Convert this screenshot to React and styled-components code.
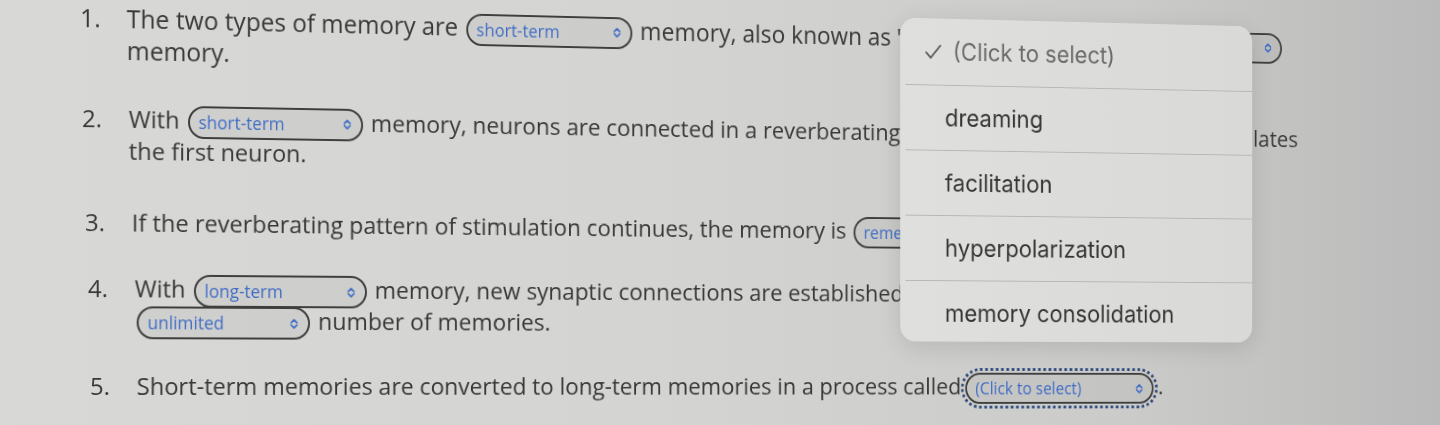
import styled, { createGlobalStyle } from 'styled-components';

const GlobalStyle = createGlobalStyle`
  html, body {
    margin: 0;
    padding: 0;
  }
  body {
    width: 1440px;
    height: 425px;
    overflow: hidden;
    background: linear-gradient(90deg, #d8d8d6 0%, #d4d4d2 45%, #cbcbc9 78%, #bababa 100%);
    font-family: 'Open Sans', 'Liberation Sans', sans-serif;
  }
`;

// the photo was taken at an angle: the right side of the screen is further away
const Page = styled.div`
  position: relative;
  width: 1440px;
  height: 425px;
  box-sizing: border-box;
  padding: 3px 0 0 80px;
  transform-origin: 80px 385px;
  transform: perspective(1000px) rotateY(3.7deg);
`;

const Item = styled.div`
  display: flex;
  margin-top: ${p => p.$top || 0}px;
  padding-left: ${p => p.$indent || 0}px;
  color: #383838;
  font-size: ${p => p.$size || 24}px;
  line-height: ${p => p.$lh || 30}px;
`;

const Num = styled.div`
  width: 47px;
  flex-shrink: 0;
`;

const Text = styled.div`
  white-space: nowrap;
`;

const Pill = styled.span`
  display: inline-flex;
  align-items: center;
  justify-content: space-between;
  box-sizing: border-box;
  width: ${p => p.$w}px;
  height: 33px;
  margin: -2px ${p => (p.$focus ? 5 : 2)}px;
  padding: 0 9px 0 9px;
  vertical-align: middle;
  border: 2px solid #3e3e3e;
  border-radius: 17px;
  background: rgba(0, 0, 0, 0.035);
  color: #3f6cc4;
  font-size: 17.5px;
  line-height: 1;
  outline: ${p => (p.$focus ? '3px dotted #2f4a7c' : 'none')};
  outline-offset: 2px;
`;

const Menu = styled.div`
  position: absolute;
  left: 948px;
  top: -3px;
  width: 403px;
  height: 342px;
  box-sizing: border-box;
  border-radius: 17px;
  background: linear-gradient(90deg, #dfdfdd 0%, #d9d9d7 100%);
  box-shadow: 0 6px 26px rgba(0, 0, 0, 0.12);
  font-family: Inter, 'Noto Sans', sans-serif;
  overflow: hidden;
`;

const Option = styled.div`
  display: flex;
  align-items: center;
  gap: 12px;
  height: ${p => (p.$first ? 70 : 68)}px;
  margin-left: 6px;
  padding-left: ${p => (p.$first ? 21 : 44)}px;
  border-top: ${p => (p.$first ? 'none' : '1px solid #b6b6b4')};
  font-size: 25px;
  color: ${p => (p.$muted ? '#6b6b6b' : '#363636')};
`;

function Chevrons() {
  return (
    <svg width="11" height="14" viewBox="0 0 10 13" fill="none" stroke="#3f6cc4" strokeWidth="1.6" strokeLinecap="round" strokeLinejoin="round">
      <path d="M2.2 5.4 L5 2.6 L7.8 5.4" />
      <path d="M2.2 7.6 L5 10.4 L7.8 7.6" />
    </svg>
  );
}

function Check() {
  return (
    <svg width="20" height="17" viewBox="0 0 17 15" fill="none" stroke="#5e5e5e" strokeWidth="1.7" strokeLinecap="round" strokeLinejoin="round">
      <path d="M1.5 8 L6 13 L15.5 1.5" />
    </svg>
  );
}

function Select({ value, w, focus }) {
  return (
    <Pill $w={w} $focus={focus}>
      <span>{value}</span>
      <Chevrons />
    </Pill>
  );
}

const options = ['dreaming', 'facilitation', 'hyperpolarization', 'memory consolidation'];

export default function App() {
  return (
    <>
      <GlobalStyle />
      <Page>
        <Item $size={25} $lh={28}>
          <Num>1.</Num>
          <Text>
            The two types of memory are <Select value="short-term" w={177} /> memory, also known as "<Select value="working" w={430} />
            <br />
            memory.
          </Text>
        </Item>
        <Item $top={40} $indent={2}>
          <Num>2.</Num>
          <Text>
            With <Select value="short-term" w={180} /> memory, neurons are connected in a reverberating circuit so that the last neuron stimulates
            <br />
            the first neuron.
          </Text>
        </Item>
        <Item $top={42} $indent={5}>
          <Num>3.</Num>
          <Text>
            If the reverberating pattern of stimulation continues, the memory is <Select value="remembered" w={180} />.
          </Text>
        </Item>
        <Item $top={34} $indent={8}>
          <Num>4.</Num>
          <Text>
            With <Select value="long-term" w={178} /> memory, new synaptic connections are established, allowing for an
            <br />
            <Select value="unlimited" w={177} /> number of memories.
          </Text>
        </Item>
        <Item $top={34} $indent={10}>
          <Num>5.</Num>
          <Text>
            Short-term memories are converted to long-term memories in a process called<Select value="(Click to select)" w={215} focus />.
          </Text>
        </Item>

        <Menu>
          <Option $first $muted>
            <Check />
            (Click to select)
          </Option>
          {options.map(o => (
            <Option key={o}>{o}</Option>
          ))}
        </Menu>
      </Page>
    </>
  );
}
